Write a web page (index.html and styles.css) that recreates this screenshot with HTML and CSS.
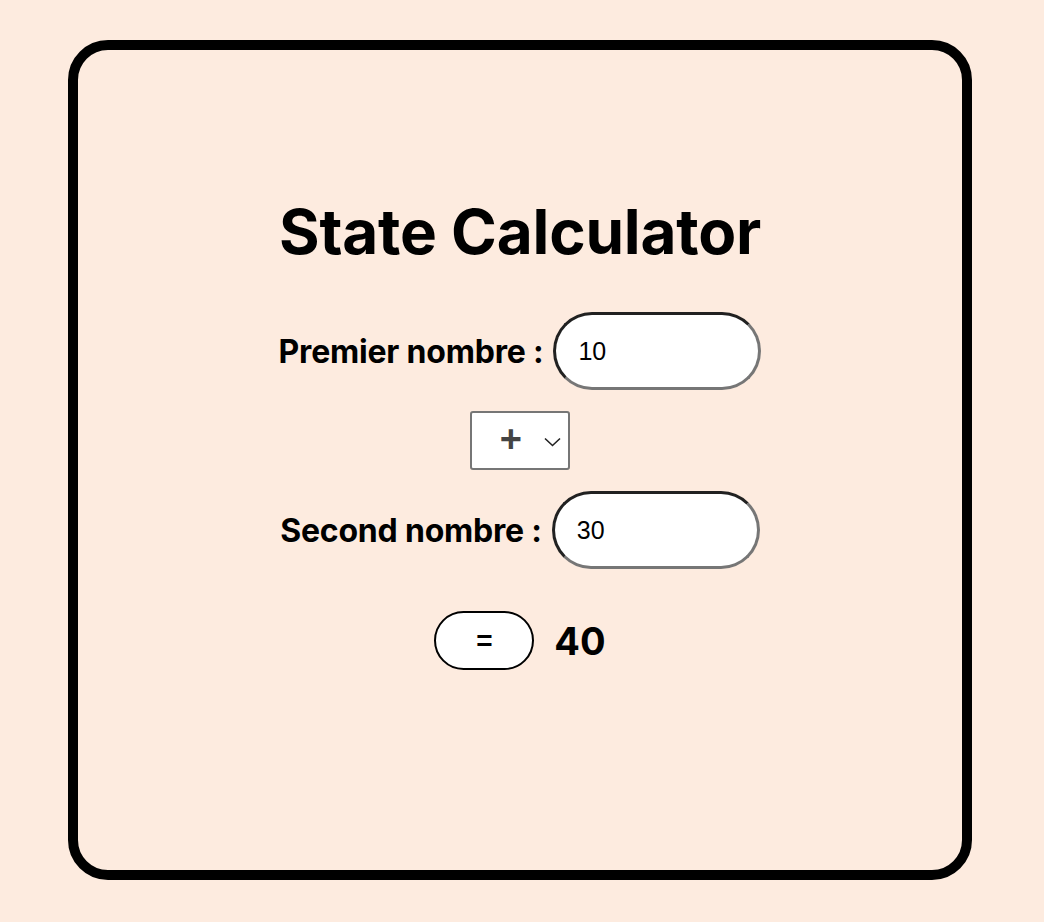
FILE: index.html
```html
<!DOCTYPE html>
<html lang="fr">
<head>
<meta charset="utf-8">
<title>State Calculator</title>
<link rel="stylesheet" href="styles.css">
</head>
<body>
<main class="card">
  <h1 class="title">State Calculator</h1>
  <div class="field">
    <label class="label" for="a">Premier nombre :</label>
    <input class="num" id="a" type="text" value="10">
  </div>
  <div class="op">
    <span class="op-sign">+</span>
    <svg class="chev" width="17" height="10" viewBox="0 0 17 10"><path d="M1 1.5 L8.5 8.5 L16 1.5" fill="none" stroke="#222" stroke-width="1.6"/></svg>
  </div>
  <div class="field">
    <label class="label" for="b">Second nombre :</label>
    <input class="num" id="b" type="text" value="30">
  </div>
  <div class="result-row">
    <button class="eq" type="button">=</button>
    <span class="result">40</span>
  </div>
</main>
</body>
</html>
```
FILE: styles.css
```css
html, body {
  margin: 0;
  padding: 0;
  background: #fdebdf;
}
body {
  padding: 40px 72px 42px 68px;
  font-family: Inter, "Noto Sans", sans-serif;
  color: #000;
}
.card {
  box-sizing: border-box;
  height: 840px;
  border: 10px solid #000;
  border-radius: 40px;
  display: flex;
  flex-direction: column;
  align-items: center;
  padding-top: 151px;
}
.title {
  margin: 0 0 49px 0;
  font-size: 62px;
  font-weight: 700;
  line-height: 1;
  letter-spacing: -0.2px;
}
.field {
  display: flex;
  align-items: center;
  gap: 10px;
}
.label {
  font-size: 32px;
  font-weight: 700;
  letter-spacing: -0.2px;
}
.num {
  box-sizing: border-box;
  width: 208px;
  height: 78px;
  border: 3px inset #767676;
  border-radius: 40px;
  background: #fff;
  padding: 0 22px;
  font-family: "Liberation Sans", Arial, sans-serif;
  font-size: 25px;
  color: #000;
  outline: none;
}
.op {
  box-sizing: border-box;
  width: 100px;
  height: 59px;
  margin: 21px 0;
  border: 2px solid #767676;
  border-radius: 3px;
  background: #fff;
  display: flex;
  align-items: center;
  justify-content: flex-end;
  gap: 22px;
  padding-right: 7px;
}
.op-sign {
  font-family: "Liberation Sans", Arial, sans-serif;
  font-size: 38px;
  font-weight: 700;
  color: #444;
  line-height: 1;
  margin-top: -4px;
}
.chev {
  margin-top: 2px;
}
.result-row {
  display: flex;
  align-items: center;
  gap: 20px;
  margin-top: 42px;
}
.eq {
  box-sizing: border-box;
  width: 100px;
  height: 59px;
  border: 2px solid #000;
  border-radius: 30px;
  background: #fff;
  font-family: "Liberation Sans", Arial, sans-serif;
  font-size: 28px;
  font-weight: 700;
  color: #000;
  padding: 0;
}
.result {
  font-size: 38px;
  font-weight: 700;
}
```
